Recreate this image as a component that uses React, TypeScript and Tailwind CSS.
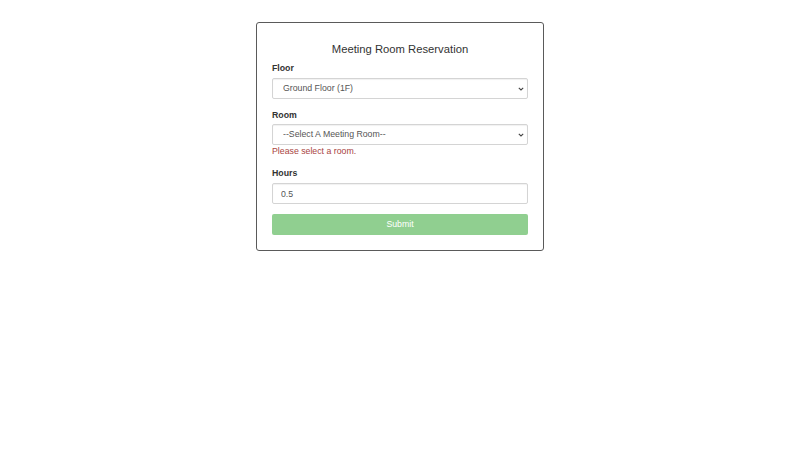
import React, { useState } from 'react';

function Chevron() {
  return (
    <svg
      className="pointer-events-none absolute right-[4px] top-1/2 -translate-y-1/2"
      width="6"
      height="4"
      viewBox="0 0 6 4"
      fill="none"
    >
      <path d="M0.8 0.8 L3 3 L5.2 0.8" stroke="#444" strokeWidth="1.1" />
    </svg>
  );
}

export default function App() {
  const [floor, setFloor] = useState('1F');
  const [room, setRoom] = useState('');
  const [hours, setHours] = useState('0.5');

  const font = { fontFamily: '"Liberation Sans", Arial, sans-serif' };
  const field =
    'block w-full h-[21px] border border-[#d4d4d4] rounded-[2px] bg-white text-[8.75px] text-[#555] shadow-[inset_0_1px_1px_rgba(0,0,0,0.06)]';

  return (
    <div className="min-h-screen bg-white" style={font}>
      <div className="pt-[22px] flex justify-center">
        <form
          className="w-[288px] border border-[#5a5a5a] rounded-[3px] px-[15px] pt-[18px] pb-[15px] text-[#333]"
          onSubmit={(e) => e.preventDefault()}
        >
          <h4 className="text-center text-[11.25px] leading-[16px] text-[#333]">Meeting Room Reservation</h4>

          <label className="block mt-[5px] text-[8.75px] leading-[12px] font-bold">Floor</label>
          <div className="relative mt-[4px]">
            <select
              className={`${field} appearance-none px-[10px]`}
              value={floor}
              onChange={(e) => setFloor(e.target.value)}
            >
              <option value="1F">Ground Floor (1F)</option>
              <option value="2F">Second Floor (2F)</option>
            </select>
            <Chevron />
          </div>

          <label className="block mt-[10px] text-[8.75px] leading-[12px] font-bold">Room</label>
          <div className="relative mt-[3px]">
            <select
              className={`${field} appearance-none px-[10px]`}
              value={room}
              onChange={(e) => setRoom(e.target.value)}
            >
              <option value="">--Select A Meeting Room--</option>
              <option value="a">Room A</option>
            </select>
            <Chevron />
          </div>
          <p className="text-[8.75px] leading-[12px] text-[#a94442]">Please select a room.</p>

          <label className="block mt-[10px] text-[8.75px] leading-[12px] font-bold">Hours</label>
          <input
            className={`${field} mt-[4px] px-[8px]`}
            value={hours}
            onChange={(e) => setHours(e.target.value)}
          />

          <button
            type="submit"
            disabled
            className="block mt-[10px] w-full h-[21px] rounded-[2px] bg-[#90cf90] text-white text-[8.75px]"
          >
            Submit
          </button>
        </form>
      </div>
    </div>
  );
}
